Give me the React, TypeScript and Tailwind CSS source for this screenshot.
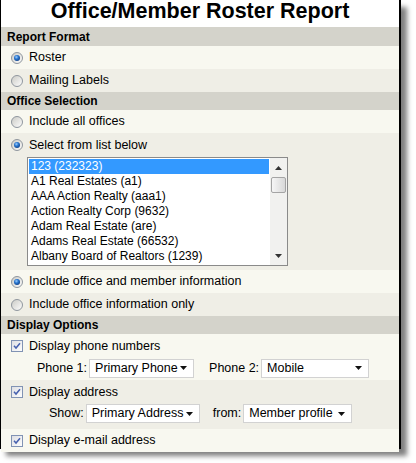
import React from "react";

const FONT = "font-['Liberation_Sans',Arial,sans-serif]";

function Radio({ checked, id }: { checked?: boolean; id: string }) {
  return (
    <svg width="12" height="12" viewBox="0 0 12 12" className="shrink-0">
      <defs>
        <linearGradient id={`rg-${id}`} x1="0" y1="0" x2="1" y2="1">
          <stop offset="0" stopColor="#c9c9c4" />
          <stop offset="1" stopColor="#ffffff" />
        </linearGradient>
        <radialGradient id={`rd-${id}`} cx="0.4" cy="0.35" r="0.7">
          <stop offset="0" stopColor="#9fd0ff" />
          <stop offset="0.45" stopColor="#2a77d0" />
          <stop offset="1" stopColor="#0f3f86" />
        </radialGradient>
      </defs>
      <circle cx="6" cy="6" r="5.5" fill={`url(#rg-${id})`} stroke="#8f969e" strokeWidth="1" />
      {checked && <circle cx="6" cy="6" r="3" fill={`url(#rd-${id})`} />}
    </svg>
  );
}

function Check({ id }: { id: string }) {
  return (
    <svg width="12" height="12" viewBox="0 0 12 12" className="shrink-0">
      <defs>
        <linearGradient id={`cg-${id}`} x1="0" y1="0" x2="1" y2="1">
          <stop offset="0" stopColor="#dcdde2" />
          <stop offset="1" stopColor="#ffffff" />
        </linearGradient>
      </defs>
      <rect x="0.5" y="0.5" width="11" height="11" fill={`url(#cg-${id})`} stroke="#8193b4" />
      <path d="M3 5.8 L5 8 L9 3.2" fill="none" stroke="#4660ae" strokeWidth="1.5" />
    </svg>
  );
}

function Sel({ label, w }: { label: string; w: string }) {
  return (
    <div className={`flex items-center justify-between h-[19px] border border-[#d2d2d2] bg-white pl-[5px] pr-[6px] ${w}`}>
      <span className="text-[12.5px] text-black leading-none">{label}</span>
      <svg width="7" height="4" viewBox="0 0 7 4">
        <path d="M0 0 H7 L3.5 4 Z" fill="#111" />
      </svg>
    </div>
  );
}

const Header = ({ children }: { children: React.ReactNode }) => (
  <div className="h-[18px] bg-[#d4d3cb] flex items-center pl-[6px] text-[12px] font-bold text-black">
    {children}
  </div>
);

const items = [
  "123 (232323)",
  "A1 Real Estates (a1)",
  "AAA Action Realty (aaa1)",
  "Action Realty Corp (9632)",
  "Adam Real Estate (are)",
  "Adams Real Estate (66532)",
  "Albany Board of Realtors (1239)",
];

export default function App() {
  const light = "bg-[#f8f8f0]";
  const dark = "bg-[#efeee6]";
  const row = "h-[23px] flex items-center pl-[10px] gap-[6px] text-[12.5px] text-black";
  return (
    <div className={`w-[416px] h-[463px] bg-white ${FONT}`}>
      <div className="w-[401px] h-[449px] border-l border-r-2 border-b-2 border-black bg-white shadow-[6px_7px_5px_rgba(0,0,0,0.5)]">
        <div className="h-[27px] text-center text-[21.5px] font-bold leading-[23px] text-black">
          Office/Member Roster Report
        </div>
        <div className="h-[19px] bg-[#d4d3cb] flex items-center pl-[6px] text-[12px] font-bold text-black">
          Report Format
        </div>
        <div className={`${row} ${light}`}>
          <Radio checked id="a" />
          <span>Roster</span>
        </div>
        <div className={`${row} ${dark}`}>
          <Radio id="b" />
          <span>Mailing Labels</span>
        </div>
        <Header>Office Selection</Header>
        <div className={`${row} ${light}`}>
          <Radio id="c" />
          <span>Include all offices</span>
        </div>
        <div className={`${dark} flex flex-col pb-[4px]`}>
          <div className={`${row} h-[24px]`}>
            <Radio checked id="d" />
            <span>Select from list below</span>
          </div>
          <div className="ml-[26px] w-[261px] h-[109px] border border-[#8a8a8a] bg-white flex">
            <div className="flex-1 p-[1px] flex flex-col">
              {items.map((t, i) => (
                <div
                  key={t}
                  className={`h-[15px] leading-[15px] pl-[2px] text-[12px] whitespace-nowrap ${
                    i === 0 ? "bg-[#3399ff] text-white" : "text-black"
                  }`}
                >
                  {t}
                </div>
              ))}
            </div>
            <div className="w-[17px] bg-[#f1f1ef] flex flex-col items-center">
              <div className="h-[19px] flex items-center justify-center">
                <svg width="7" height="4" viewBox="0 0 7 4">
                  <path d="M3.5 0 L7 4 H0 Z" fill="#333" />
                </svg>
              </div>
              <div className="w-[15px] h-[16px] rounded-[2px] border border-[#a4a4a4] bg-gradient-to-r from-[#f6f6f6] to-[#d8d8d8]" />
              <div className="flex-1" />
              <div className="h-[19px] flex items-center justify-center">
                <svg width="7" height="4" viewBox="0 0 7 4">
                  <path d="M0 0 H7 L3.5 4 Z" fill="#333" />
                </svg>
              </div>
            </div>
          </div>
        </div>
        <div className={`${row} ${light}`}>
          <Radio checked id="e" />
          <span>Include office and member information</span>
        </div>
        <div className={`${row} h-[22px] ${dark}`}>
          <Radio id="f" />
          <span>Include office information only</span>
        </div>
        <Header>Display Options</Header>
        <div className={light}>
          <div className={`${row} h-[24px]`}>
            <Check id="g" />
            <span>Display phone numbers</span>
          </div>
          <div className="h-[22px] flex items-start pl-[36px] text-[12.5px] text-black">
            <div className="flex items-center h-[20px]">
              <span>Phone 1:</span>
              <Sel label="Primary Phone" w="w-[105px] ml-[2px]" />
              <span className="ml-[15px]">Phone 2:</span>
              <Sel label="Mobile" w="w-[108px] ml-[2px]" />
            </div>
          </div>
        </div>
        <div className={dark}>
          <div className={`${row} h-[24px]`}>
            <Check id="h" />
            <span>Display address</span>
          </div>
          <div className="h-[25px] flex items-start pl-[48px] text-[12.5px] text-black">
            <div className="flex items-center h-[19px]">
              <span>Show:</span>
              <Sel label="Primary Address" w="w-[114px] ml-[2px]" />
              <span className="ml-[13px]">from:</span>
              <Sel label="Member profile" w="w-[109px] ml-[2px]" />
            </div>
          </div>
        </div>
        <div className={`${row} h-[19px] ${light}`}>
          <Check id="i" />
          <span>Display e-mail address</span>
        </div>
      </div>
    </div>
  );
}
